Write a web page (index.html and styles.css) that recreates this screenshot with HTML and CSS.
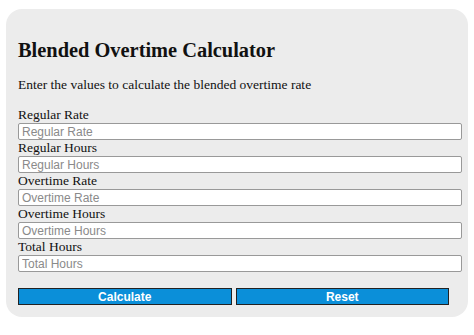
FILE: index.html
```html
<!DOCTYPE html>
<html lang="en">

<head>
    <meta charset="UTF-8">
    <meta name="viewport" content="width=device-width, initial-scale=1.0">
    <title>Blended Overtime Calculator</title>
    <link rel="stylesheet" href="styles.css">
</head>

<body>
    <div class="calculator">
        <h2>Blended Overtime Calculator</h2>
        <p>Enter the values to calculate the blended overtime rate</p>
        <div class="fields">
            <label for="regularRate">Regular Rate</label>
            <input type="number" id="regularRate" placeholder="Regular Rate">
            <label for="regularHours">Regular Hours</label>
            <input type="number" id="regularHours" placeholder="Regular Hours">
            <label for="overtimeRate">Overtime Rate</label>
            <input type="number" id="overtimeRate" placeholder="Overtime Rate">
            <label for="overtimeHours">Overtime Hours</label>
            <input type="number" id="overtimeHours" placeholder="Overtime Hours">
            <label for="totalHours">Total Hours</label>
            <input type="number" id="totalHours" placeholder="Total Hours">
        </div>
        <div class="buttons">
            <button>Calculate</button>
            <button>Reset</button>
        </div>
    </div>
</body>

</html>
```

FILE: styles.css
```css
body {
    margin: 0;
    font-family: "Liberation Serif", "Times New Roman", serif;
    background: #fff;
}

.calculator {
    margin: 9px 0 0 6px;
    width: 450px;
    padding: 12px 0 12px 12px;
    background: #ececec;
    border-radius: 16px;
    color: #111;
}

.calculator h2 {
    font-size: 20.4px;
    margin: 17px 0 0;
    line-height: 24px;
}

.calculator p {
    font-size: 13.5px;
    margin: 15px 0 14px;
    line-height: 16px;
}

.fields {
    display: flex;
    flex-direction: column;
    width: 444px;
}

.fields label {
    font-size: 13.5px;
    line-height: 16px;
}

.fields input {
    height: 17px;
    box-sizing: border-box;
    border: 1px solid #999;
    border-radius: 2px;
    padding: 0 3px;
    font-family: "Liberation Sans", Arial, sans-serif;
    font-size: 12px;
    background: #fff;
}

.fields input::placeholder {
    color: #8a8a8a;
}

.buttons {
    display: flex;
    gap: 4px;
    margin-top: 16px;
    width: 431px;
}

.buttons button {
    flex: 1;
    height: 17px;
    padding: 0;
    background: #0b8fd9;
    border: 1px solid #222;
    color: #fff;
    font-family: "Liberation Sans", Arial, sans-serif;
    font-weight: bold;
    font-size: 12px;
}
```
